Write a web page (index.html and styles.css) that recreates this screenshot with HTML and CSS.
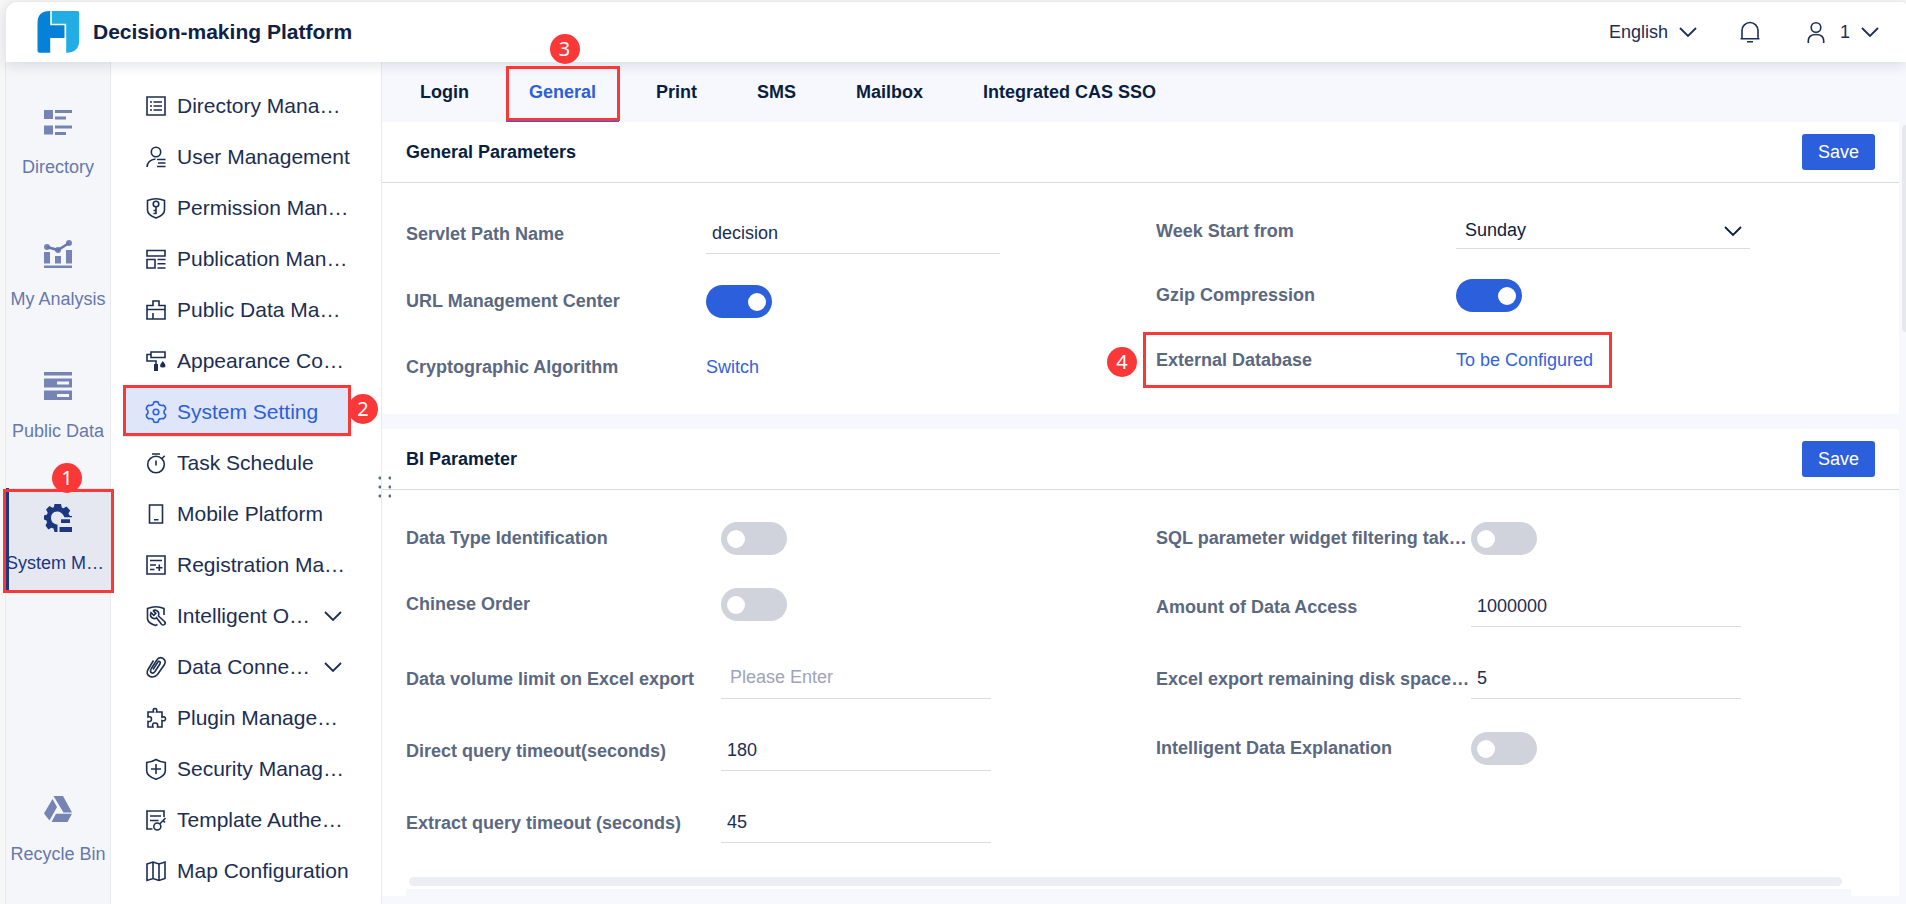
FILE: index.html
```html
<!DOCTYPE html>
<html lang="en">
<head>
<meta charset="utf-8">
<title>Decision-making Platform</title>
<link rel="stylesheet" href="styles.css">
</head>
<body>
<div class="app">
  <header class="header">
    <svg class="logo" viewBox="0 0 42 42" aria-hidden="true">
      <path fill="#0681d8" d="M0 12Q0 0 12 0H12.7V14.3H27V27H12.7V41.7H2Q0 41.7 0 39.7Z"/>
      <path fill="#22ade5" d="M14.3 0H39.7Q41.7 0 41.7 2V29Q41.7 41.7 28.7 41.7V12.7H14.3Z"/>
    </svg>
    <h1 class="title">Decision-making Platform</h1>
    <div class="tools">
      <button class="tool" type="button">English
        <svg class="chevron" viewBox="0 0 24 24"><path d="M4 8l8 8 8-8"/></svg>
      </button>
      <button class="tool" type="button" aria-label="Notifications">
        <svg class="icon" viewBox="0 0 24 24"><path d="M4 18.500V10.500a8 8 0 0 1 16 0V18.500M2.500 18.700H21.500M9 21.700H15"/></svg>
      </button>
      <button class="tool tool-user" type="button">
        <svg class="icon" viewBox="0 0 24 24"><circle cx="12" cy="7.500" r="4.800"/><path d="M4.300 23v-2q0-6.500 7.700-6.500t7.700 6.500v2"/></svg>
        <span>1</span>
        <svg class="chevron" viewBox="0 0 24 24"><path d="M4 8l8 8 8-8"/></svg>
      </button>
    </div>
  </header>

  <div class="body">
    <nav class="rail" aria-label="Modules">
      <a class="rail-item" href="#directory">
        <svg viewBox="0 0 28 28"><path d="M0 2h9v9H0zM11 2h17v3H11zM11 8.500h11v3H11zM0 17.500h9v9H0zM11 17.500h17v3H11zM11 24h11v3H11z"/></svg>
        <span>Directory</span>
      </a>
      <a class="rail-item" href="#analysis">
        <svg viewBox="0 0 28 28"><path d="M0 12h6v11.500H0zM11 16h6v7.500h-6zM22 10h6v13.500h-6zM0 25.500h28v3H0z"/><circle cx="3" cy="7" r="3"/><circle cx="14" cy="10" r="3"/><circle cx="25" cy="3" r="3"/><path d="M3 7l11 3 11-7" fill="none" stroke="currentColor" stroke-width="2.600"/></svg>
        <span>My Analysis</span>
      </a>
      <a class="rail-item" href="#public">
        <svg viewBox="0 0 28 28"><path fill-rule="evenodd" d="M0 0h28v3.500H0zM0 6.500h28v9H0zM13 9.500v3h12v-3zM0 18.500h28v9.500H0zM13 22v3h12v-3z"/></svg>
        <span>Public Data</span>
      </a>
      <a class="rail-item rail-item-on" href="#system">
        <svg viewBox="0 0 28 28"><path d="M10.500 0h6.500l.8 3.500 1.700.8L22.500 2.500l3.700 4-1.800 3L26 12h2v1.300H20.500Q18 7.500 13 7.500 7 8 7 14q0 5 5.500 6.500H13.500V28H10.500L9.500 24.500 7.500 23.700 4.300 25.500 1.500 21.500 3 18.500 2.500 16.500 0 15.500V11.500L3 10.500 3.700 8.500 2 5.500 5.500 2 8.500 3.700 9.800 3.200zM17 15.200h9v3.800h-9zM15.500 23h12.500v5H15.500z"/></svg>
        <span>System Management</span>
        <i class="frame"></i><b class="badge badge-top">1</b>
      </a>
      <a class="rail-item rail-bottom" href="#recycle">
        <svg viewBox="0 0 28 28"><path d="M9.500 1h9.500L28 17.500H19.500zM8.500 4l4.500 8-7.500 13.500L0 18.500zM12 18.800h16L23.500 27H7.500z"/></svg>
        <span>Recycle Bin</span>
      </a>
    </nav>

    <nav class="menu" aria-label="System management">
      <a class="menu-item" href="#m1"><svg class="icon" viewBox="0 0 24 24"><path d="M3 3h18v18H3zM6 8h2M9.500 8h8.500M6 12h2M9.500 12h8.500M6 16h2M9.500 16h8.500"/></svg><span>Directory Management</span></a>
      <a class="menu-item" href="#m2"><svg class="icon" viewBox="0 0 24 24"><circle cx="12" cy="7" r="4.700"/><path d="M3 22q.5-7 8.500-8M13 14.500h8.500M14 18h7.500M13 21.500h8.500"/></svg><span>User Management</span></a>
      <a class="menu-item" href="#m3"><svg class="icon" viewBox="0 0 24 24"><path d="M3.500 4.500Q12 1 20.500 4.500V14q0 5-8.500 8-8.500-3-8.500-8z"/><circle cx="12" cy="8" r="2.800"/><path d="M12 11v7M12 14.500H9.500M12 17.500H9.500"/></svg><span>Permission Management</span></a>
      <a class="menu-item" href="#m4"><svg class="icon" viewBox="0 0 24 24"><path d="M3 3.500h18v5.500H3zM3 12.500h8v8.500H3zM13.500 12.500H21.500M13.500 16.700H21.500M13.500 21H21.500"/></svg><span>Publication Management</span></a>
      <a class="menu-item" href="#m5"><svg class="icon" viewBox="0 0 24 24"><path d="M3 21V7.500H9V3h6v4.500h6V21zM3 11.500h18M9 21v-6"/></svg><span>Public Data Management</span></a>
      <a class="menu-item" href="#m6"><svg class="icon" viewBox="0 0 24 24"><path d="M7 3h14v5.500H7zM7 5.500H3V12h9v4"/><path class="solid" d="M10 15h4v7h-4zM18.800 12q5.500 6.500 0 6.500t0-6.500"/></svg><span>Appearance Configuration</span></a>
      <a class="menu-item menu-item-on" href="#m7"><svg class="icon" viewBox="0 0 24 24"><path d="M9.700 2.300Q12 1 14.300 2.300Q14.500 5 16 5.100Q18 5.800 19.300 5.200Q21.800 6.500 21.600 9.100Q19.800 10.500 20 12Q19.800 13.500 21.600 14.900Q21.800 17.500 19.300 18.800Q18 18.200 16 18.900Q14.500 19 14.300 21.700Q12 23 9.700 21.700Q9.500 19 8 18.900Q6 18.200 4.700 18.800Q2.200 17.500 2.400 14.900Q4.200 13.500 4 12Q4.200 10.500 2.400 9.100Q2.200 6.500 4.700 5.200Q6 5.800 8 5.100Q9.500 5 9.700 2.300Z"/><circle cx="12" cy="12" r="2.800"/></svg><span>System Setting</span><i class="frame"></i><b class="badge badge-right">2</b></a>
      <a class="menu-item" href="#m8"><svg class="icon" viewBox="0 0 24 24"><circle cx="12" cy="13.500" r="8.300"/><path d="M8 3h8M12 9.500v5M18 7.500L20.700 4.800"/></svg><span>Task Schedule</span></a>
      <a class="menu-item" href="#m9"><svg class="icon" viewBox="0 0 24 24"><path d="M5.500 3h13v18h-13zM10 17.800h4.500"/></svg><span>Mobile Platform</span></a>
      <a class="menu-item" href="#m10"><svg class="icon" viewBox="0 0 24 24"><path d="M3 3h18v18H3zM6 7.500h12M6 12h6M6 16.500h4.500M12 14.800h6.500M15.300 11.500v6.500"/></svg><span>Registration Management</span></a>
      <a class="menu-item menu-item-sub" href="#m11"><svg class="icon" viewBox="0 0 24 24"><path d="M20 11V4.500Q12 1 3.500 4.500V15q1 4.500 8 6.500l2-1"/><path d="M9 6.700l2.800 2.600-2 2L7 8.700Q5.500 12.500 8.500 14t4-.3l5 6.500q1.500 1.500 3 .3 1.500-1.500 0-3L14.500 12Q15.500 8 13 6.700 11 5.500 9 6.700"/></svg><span>Intelligent Operation</span><svg class="chevron" viewBox="0 0 24 24"><path d="M4 8l8 8 8-8"/></svg></a>
      <a class="menu-item menu-item-sub" href="#m12"><svg class="icon" viewBox="0 0 24 24"><path d="M7 14l5.500-8.500Q15 1.500 18.700 3.200 22.500 5.500 20.500 9.500L13.500 19.500Q10.500 23 6 21.500 1.500 19 4 14.500L9.500 5.500"/><path d="M7 14q-1.300 2.800.5 3.800t3.500-1.300L16 8.800q.8-1.600-.3-2.300t-2 .8L9 14.500"/></svg><span>Data Connection</span><svg class="chevron" viewBox="0 0 24 24"><path d="M4 8l8 8 8-8"/></svg></a>
      <a class="menu-item" href="#m13"><svg class="icon" viewBox="0 0 24 24"><path d="M4 6H9.500Q8.500 2.500 11 2.500T12.500 6H18v5.200Q21.500 10 21.500 12.800T18 14.500V21H13.500Q14.500 17 11 17T9 21H4V15.500Q7.500 16 7.500 13T4 11Z"/></svg><span>Plugin Management</span></a>
      <a class="menu-item" href="#m14"><svg class="icon" viewBox="0 0 24 24"><path d="M12 2.500q4 2.500 9.300 3V14q0 5-9.300 8.300Q2.700 19 2.700 14V5.500Q8 5 12 2.500zM12 7v10M7 12h10"/></svg><span>Security Management</span></a>
      <a class="menu-item" href="#m15"><svg class="icon" viewBox="0 0 24 24"><path d="M8.500 21H3V3h17v6M6 8h11M6 12.500h8.500M15.700 16L21.500 10M19 12.500l2 2"/><circle cx="13.300" cy="18.500" r="3.500"/></svg><span>Template Authentication</span></a>
      <a class="menu-item" href="#m16"><svg class="icon" viewBox="0 0 24 24"><path d="M3 5l6-2 6 2 6-2v16.500l-6 2-6-2-6 2zM9 3v16.500M15 5v16.500"/></svg><span>Map Configuration</span></a>
      <i class="grip"></i>
    </nav>

    <main class="content">
      <nav class="tabs" aria-label="Settings">
        <a class="tab" href="#login">Login</a>
        <a class="tab tab-on" href="#general">General<i class="frame"></i><b class="badge badge-top">3</b></a>
        <a class="tab" href="#print">Print</a>
        <a class="tab" href="#sms">SMS</a>
        <a class="tab" href="#mailbox">Mailbox</a>
        <a class="tab" href="#cas">Integrated CAS SSO</a>
      </nav>

      <div class="panels">
        <section class="panel">
          <div class="panel-head"><h2>General Parameters</h2><button class="save" type="button">Save</button></div>
          <div class="grid grid-general">
            <div class="col col-low">
              <div class="row"><label for="servlet">Servlet Path Name</label><input class="field" id="servlet" type="text" value="decision"></div>
              <div class="row"><label for="url">URL Management Center</label><input class="switch" id="url" type="checkbox" checked></div>
              <div class="row"><span class="label">Cryptographic Algorithm</span><a class="link" href="#switch">Switch</a></div>
            </div>
            <div class="col">
              <div class="row"><label class="label" for="week">Week Start from</label>
                <span class="select"><select id="week" class="field"><option>Sunday</option><option>Monday</option></select><svg class="chevron" viewBox="0 0 24 24"><path d="M4 8l8 8 8-8"/></svg></span></div>
              <div class="row"><label for="gzip">Gzip Compression</label><input class="switch" id="gzip" type="checkbox" checked></div>
              <div class="row row-marked"><span class="label">External Database</span><a class="link" href="#configure">To be Configured</a><i class="frame"></i><b class="badge badge-left">4</b></div>
            </div>
          </div>
        </section>

        <section class="panel">
          <div class="panel-head"><h2>BI Parameter</h2><button class="save" type="button">Save</button></div>
          <div class="grid grid-bi">
            <div class="col">
              <div class="row"><label for="dtype">Data Type Identification</label><input class="switch" id="dtype" type="checkbox"></div>
              <div class="row row-switch"><label for="order">Chinese Order</label><input class="switch" id="order" type="checkbox"></div>
              <div class="row row-spaced"><label for="volume">Data volume limit on Excel export</label><input class="field" id="volume" type="text" placeholder="Please Enter"></div>
              <div class="row"><label for="direct">Direct query timeout(seconds)</label><input class="field" id="direct" type="text" value="180"></div>
              <div class="row"><label for="extract">Extract query timeout (seconds)</label><input class="field" id="extract" type="text" value="45"></div>
            </div>
            <div class="col">
              <div class="row"><label for="sql">SQL parameter widget filtering takes effect</label><input class="switch" id="sql" type="checkbox"></div>
              <div class="row"><label for="amount">Amount of Data Access</label><input class="field" id="amount" type="text" value="1000000"></div>
              <div class="row"><label for="disk">Excel export remaining disk space limit (GB)</label><input class="field" id="disk" type="text" value="5"></div>
              <div class="row row-switch"><label for="explain">Intelligent Data Explanation</label><input class="switch" id="explain" type="checkbox"></div>
            </div>
          </div>
          <div class="hscroll"><i></i></div>
        </section>
      </div>
      <i class="vscroll"></i>
    </main>
  </div>
</div>
</body>
</html>
```
FILE: styles.css
```css
* { box-sizing: border-box; }

body {
  margin: 0;
  background: #f7f7f7;
  color: #1c2e52;
  font: 18px/24px "Liberation Sans", Arial, sans-serif;
}

a { color: inherit; text-decoration: none; }
button, input, select { font: inherit; color: inherit; }
h1, h2 { margin: 0; }

.app {
  display: flex;
  flex-direction: column;
  min-height: 100vh;
  padding: 1px 0 0 5px;
}

.header {
  position: relative;
  z-index: 2;
  display: flex;
  align-items: center;
  height: 61px;
  padding: 0 24px 0 31px;
  border: 1px solid #e9e9ec;
  border-width: 1px 0 0 1px;
  border-radius: 12px 4px 0 0;
  background: #fff;
  box-shadow: 0 3px 14px rgba(20, 34, 66, .13);
}

.logo { width: 43px; height: 42px; }
.title { margin-left: 13px; color: #0f2147; font-size: 21px; line-height: 30px; }
.tools { display: flex; align-items: center; gap: 38px; margin-left: auto; }
.tool { display: flex; align-items: center; gap: 8px; padding: 0; border: 0; background: none; }
.tool-user { margin-left: 4px; }
.tool-user span { margin-left: 4px; }

.icon, .chevron {
  flex: none;
  width: 24px;
  height: 24px;
  fill: none;
  stroke: currentColor;
  stroke-width: 1.6;
}
.chevron { stroke-width: 1.8; }
.solid { fill: currentColor; stroke: none; }

.body { display: flex; flex: 1; }

.rail {
  display: flex;
  flex-direction: column;
  gap: 30px;
  width: 106px;
  padding: 30px 0 23px;
  border: 1px solid #e8e9ef;
  border-width: 0 1px;
  background: #f5f6fa;
  color: #6678ac;
}
.rail-item {
  position: relative;
  display: flex;
  flex-direction: column;
  align-items: center;
  gap: 19px;
  height: 102px;
  padding-top: 16px;
}
.rail-item svg { width: 28px; height: 28px; fill: #7584b3; }
.rail-item span {
  max-width: 100%;
  overflow: hidden;
  text-overflow: ellipsis;
  white-space: nowrap;
}
.rail-item-on { background: #e6e8f1; box-shadow: inset 3px 0 #1c3680; color: #1c3680; }
.rail-item-on svg { fill: #1c3680; }
.rail-bottom { margin-top: auto; }

.menu {
  position: relative;
  z-index: 1;
  width: 271px;
  padding: 18px 30px 0 12px;
  border-right: 1px solid #e8eaf0;
  background: #fff;
  font-size: 21px;
}
.menu-item {
  position: relative;
  display: flex;
  align-items: center;
  gap: 9px;
  height: 51px;
  padding-left: 21px;
}
.menu-item span {
  flex: 1;
  overflow: hidden;
  line-height: 30px;
  text-overflow: ellipsis;
  white-space: nowrap;
}
.menu-item-on { background: #e0e6fa; color: #2c5fdb; }
.menu-item-sub { padding-right: 6px; }

.grip {
  position: absolute;
  top: 412px;
  right: -10px;
  width: 20px;
  height: 26px;
  background: radial-gradient(circle at 9px 4px, #5b6a8a 1px, transparent 2px) 0 0 / 10px 9px;
}

.content {
  position: relative;
  flex: 1;
  min-width: 0;
  background: #f7f8fd;
}

.tabs { display: flex; gap: 14px; height: 60px; padding-left: 15px; }
.tab {
  position: relative;
  padding: 18px 23px 15px;
  color: #091e40;
  font-weight: bold;
}
.tab-on { border-bottom: 3px solid #2c5fdb; color: #2c5fdb; }

.panels { display: flex; flex-direction: column; gap: 15px; margin-right: 7px; }
.panel { background: #fff; }
.panel-head {
  display: flex;
  align-items: center;
  justify-content: space-between;
  height: 61px;
  padding: 0 24px;
  border-bottom: 1px solid #d9dbe3;
}
.panel-head h2 { color: #091e40; font-size: 18px; }
.save {
  width: 73px;
  height: 36px;
  padding: 0;
  border: 0;
  border-radius: 3px;
  background: #2c5fdb;
  color: #fff;
}

.grid { display: grid; grid-template-columns: repeat(2, minmax(0, 1fr)); gap: 7px; padding-left: 24px; }
.grid-general { padding-top: 30px; padding-bottom: 29px; }
.grid-bi { padding-top: 32px; padding-bottom: 34px; }

.row { display: flex; align-items: flex-start; }
.row label, .label {
  flex: none;
  overflow: hidden;
  color: #5b6880;
  font-weight: bold;
  line-height: 33px;
  text-overflow: ellipsis;
  white-space: nowrap;
}
.row .label { line-height: 36px; }

.grid-general .col { display: flex; flex-direction: column; gap: 30px; }
.grid-general .row { height: 36px; }
.grid-general .row label, .grid-general .label { width: 300px; }
.grid-general .row + .row { height: 33px; }
.grid-general .row + .row + .row { height: 36px; }
.grid-general .col-low { gap: 31px; padding-top: 5px; }
.grid-general .field { width: 294px; }

.grid-bi .row label { width: 315px; }
.grid-bi .row + .row { margin-top: 36px; }
.grid-bi .row + .row-switch { margin-top: 33px; }
.grid-bi .row + .row-spaced { margin-top: 42px; }
.grid-bi .field { width: 270px; }

.field {
  height: 36px;
  padding: 0 6px 5px;
  border: 0;
  border-bottom: 1px solid #d9dbe3;
  border-radius: 0;
  outline: 0;
  background: transparent;
  color: #1c2e52;
}
.field:placeholder-shown { padding: 0 9px 7px; }
.field::placeholder { color: #9da5b7; opacity: 1; }
.select { position: relative; display: flex; }
.select select { appearance: none; padding: 0 9px 2px; color: #091e40; }
.select .chevron { position: absolute; top: 6px; right: 5px; color: #091e40; pointer-events: none; }

.switch {
  appearance: none;
  display: flex;
  align-items: center;
  width: 66px;
  height: 33px;
  margin: 0;
  padding: 0 6px;
  border-radius: 17px;
  background: #d0d3db;
}
.switch::before { content: ""; width: 18px; height: 18px; border-radius: 50%; background: #fff; }
.switch:checked { justify-content: flex-end; background: #2c5fdb; }

.link { color: #3361dd; line-height: 36px; }

.row-marked { position: relative; align-self: flex-start; }

.frame { position: absolute; z-index: 2; border: 3px solid #fb3838; pointer-events: none; }
.rail-item .frame { inset: 1px -4px -3px -3px; }
.menu-item .frame { inset: -1px 0 1px; }
.tab .frame { inset: 4px -1px -2px 0; }
.row-marked .frame { inset: -10px -19px -10px -13px; }

.badge {
  position: absolute;
  z-index: 3;
  width: 30px;
  height: 30px;
  border-radius: 50%;
  background: #fb3838;
  color: #fff;
  font: 20px/29px "Noto Sans", sans-serif;
  text-align: center;
}
.badge-top { top: -25px; left: 50%; margin-left: -6px; }
.tab .badge-top { top: -28px; margin-left: -13px; }
.badge-right { top: 8px; right: -27px; }
.badge-left { top: 5px; left: -49px; }

.hscroll { padding: 0 0 7px 24px; }
.hscroll i { display: block; height: 9px; margin: 0 57px 0 3px; border-radius: 5px; background: #edeef3; }
.hscroll::after { content: ""; display: block; height: 7px; margin: 3px 48px -7px 0; background: #f7f8fd; }

.vscroll {
  position: absolute;
  top: 63px;
  right: 0;
  width: 4px;
  height: 207px;
  border-radius: 4px 0 0 4px;
  background: #e6e8ee;
}
```
